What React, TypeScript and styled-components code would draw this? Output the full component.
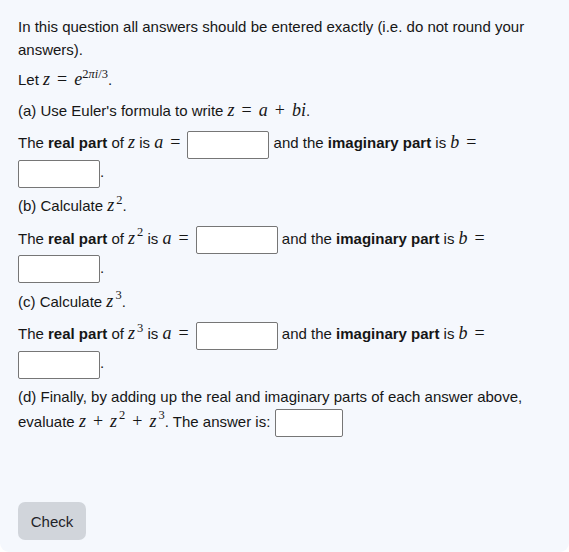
import React from "react";
import styled, { createGlobalStyle } from "styled-components";

const GlobalStyle = createGlobalStyle`
  html, body { margin: 0; padding: 0; background: #ffffff; }
  body { font-family: "Liberation Sans", Arial, sans-serif; color: #161616; }
`;

const Card = styled.div`
  box-sizing: border-box;
  width: 569px;
  height: 552px;
  background: #f5f8fd;
  border-radius: 0 0 9px 9px;
  padding: 16px 36px 12px 18px;
  display: flex;
  flex-direction: column;
  font-size: 15px;
`;

const Para = styled.p`
  margin: 0 0 8px;
  line-height: 22.5px;
`;

const AnswerRow = styled(Para)`
  margin-bottom: 7px;
`;

const M = styled.span`
  font-family: "Liberation Serif", "Times New Roman", serif;
  font-style: italic;
  font-size: 18px;
  line-height: 1;
  white-space: nowrap;
`;

const Op = styled.span`
  font-family: "Liberation Serif", "Times New Roman", serif;
  font-style: normal;
  font-size: 18px;
  line-height: 1;
  margin: 0 7px;
`;

const Sup = styled.sup<{ $gap?: number }>`
  font-size: 12.5px;
  font-style: normal;
  line-height: 0;
  vertical-align: 0;
  position: relative;
  top: -0.6em;
  margin-left: ${(p) => p.$gap ?? 0}px;
`;

const Ital = styled.span`
  font-style: italic;
`;

const Answer = styled.input<{ $w: number }>`
  box-sizing: border-box;
  width: ${(p) => p.$w}px;
  height: 28px;
  margin: 0.5px 0;
  padding: 0 4px;
  border: 1px solid #767676;
  border-radius: 2px;
  background: #ffffff;
  vertical-align: middle;
  font: inherit;
`;

const Footer = styled.div`
  margin-top: auto;
`;

const CheckButton = styled.button`
  width: 68px;
  height: 38px;
  border: none;
  border-radius: 7px;
  background: #d1d5db;
  color: #1f2328;
  font-family: "Liberation Sans", Arial, sans-serif;
  font-size: 15px;
  cursor: pointer;
`;

const Z = ({ p }: { p?: string }) => (
  <M>
    z{p ? <Sup $gap={2}>{p}</Sup> : null}
  </M>
);

function PartRow({ power }: { power?: string }) {
  return (
    <AnswerRow>
      The <b>real part</b> of <Z p={power} />
      {power ? " " : ""} is <M>a</M>
      <Op>=</Op>
      <Answer $w={82} /> and the <b>imaginary part</b> is <M>b</M>
      <Op>=</Op> <Answer $w={82} />.
    </AnswerRow>
  );
}

export default function App() {
  return (
    <>
      <GlobalStyle />
      <Card>
        <Para>
          In this question all answers should be entered exactly (i.e. do not round your answers).
        </Para>
        <Para>
          Let <M>z</M>
          <Op>=</Op>
          <M>
            e
            <Sup>
              2<Ital>πi</Ital>/3
            </Sup>
          </M>
          .
        </Para>
        <Para>
          (a) Use Euler's formula to write <M>z</M>
          <Op>=</Op>
          <M>a</M>
          <Op>+</Op>
          <M>bi</M>.
        </Para>
        <PartRow />
        <Para>
          (b) Calculate <Z p="2" />.
        </Para>
        <PartRow power="2" />
        <Para>
          (c) Calculate <Z p="3" />.
        </Para>
        <PartRow power="3" />
        <Para>
          (d) Finally, by adding up the real and imaginary parts of each answer above, evaluate{" "}
          <M>z</M>
          <Op>+</Op>
          <Z p="2" />
          <Op>+</Op>
          <Z p="3" />. The answer is: <Answer $w={68} />
        </Para>
        <Footer>
          <CheckButton>Check</CheckButton>
        </Footer>
      </Card>
    </>
  );
}
